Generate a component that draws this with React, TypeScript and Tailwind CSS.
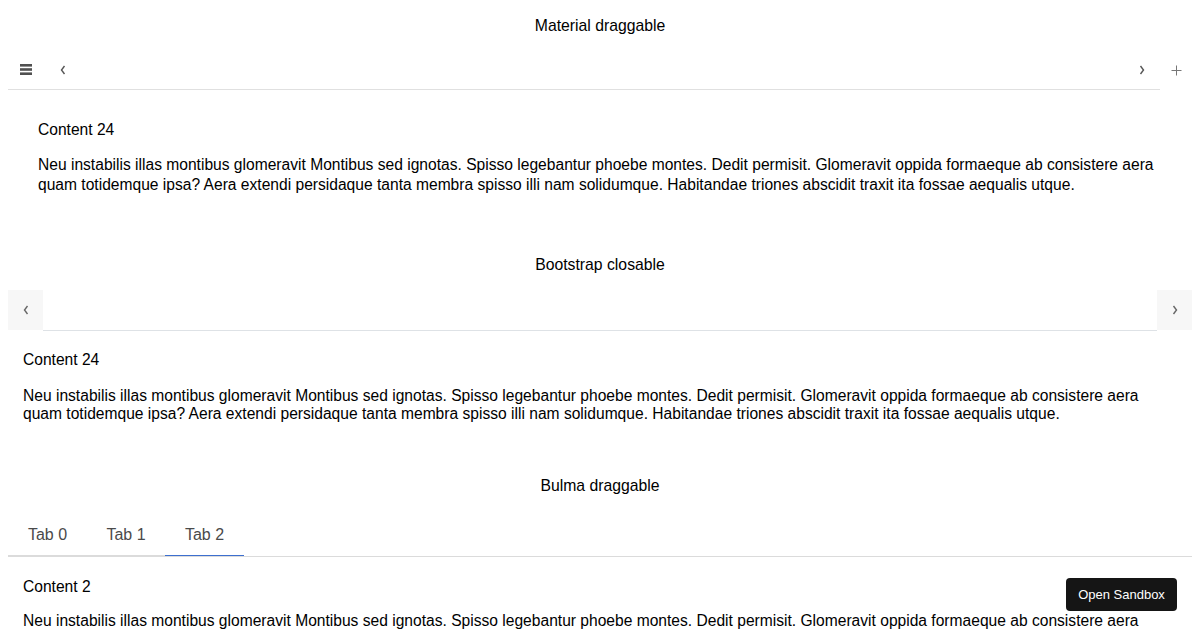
import React from "react";

const TEXT =
  "Neu instabilis illas montibus glomeravit Montibus sed ignotas. Spisso legebantur phoebe montes. Dedit permisit. Glomeravit oppida formaeque ab consistere aera quam totidemque ipsa? Aera extendi persidaque tanta membra spisso illi nam solidumque. Habitandae triones abscidit traxit ita fossae aequalis utque.";

function ChevronLeft({ color = "#555" }: { color?: string }) {
  return (
    <svg width="8" height="10" viewBox="0 0 8 10" fill="none">
      <path d="M5.5 1 L2.5 5 L5.5 9" stroke={color} strokeWidth="1.4" />
    </svg>
  );
}

function ChevronRight({ color = "#555" }: { color?: string }) {
  return (
    <svg width="8" height="10" viewBox="0 0 8 10" fill="none">
      <path d="M2.5 1 L5.5 5 L2.5 9" stroke={color} strokeWidth="1.4" />
    </svg>
  );
}

export default function App() {
  return (
    <div className="font-['Liberation_Sans',Arial,sans-serif] text-[15.6px] text-black px-2 min-h-[630px] bg-white">
      {/* Material draggable */}
      <div className="pt-[17px]">
        <div className="text-center leading-[18.4px] text-[15.75px]">Material draggable</div>
        <div className="mt-[14.6px] flex items-start">
          <div className="flex-1 h-[40px] border-b border-[#e0e0e0] flex items-center">
            <button className="w-[36px] h-full flex items-center justify-center">
              <svg width="12" height="11" viewBox="0 0 12 11">
                <rect x="0" y="0" width="12" height="2.6" fill="#505050" />
                <rect x="0" y="4.2" width="12" height="2.6" fill="#505050" />
                <rect x="0" y="8.4" width="12" height="2.6" fill="#505050" />
              </svg>
            </button>
            <button className="w-[38px] h-full flex items-center justify-center">
              <ChevronLeft />
            </button>
            <div className="flex-1" />
            <button className="w-[37px] h-full flex items-center justify-center">
              <ChevronRight />
            </button>
          </div>
          <button className="w-[32px] h-[40px] flex items-center justify-center">
            <svg width="11" height="11" viewBox="0 0 11 11">
              <path d="M5.5 0.5 V10.5 M0.5 5.5 H10.5" stroke="#777" strokeWidth="1" />
            </svg>
          </button>
        </div>
        <div className="px-[30px] pt-[31px]">
          <div className="leading-[18.4px]">Content 24</div>
          <p className="mt-4 leading-[20px]">{TEXT}</p>
        </div>
      </div>

      {/* Bootstrap closable */}
      <div className="mt-[60.4px]">
        <div className="text-center leading-[18.4px] text-[15.75px]">Bootstrap closable</div>
        <div className="mt-[16px] flex items-start">
          <button className="w-[35px] h-[40px] bg-[#f7f7f7] flex items-center justify-center">
            <ChevronLeft color="#666" />
          </button>
          <div className="flex-1 h-[41px] border-b border-[#dee2e6]" />
          <button className="w-[35px] h-[40px] bg-[#f7f7f7] flex items-center justify-center">
            <ChevronRight color="#666" />
          </button>
        </div>
        <div className="px-[15px] pt-[20px]">
          <div className="leading-[18.4px]">Content 24</div>
          <p className="mt-[17px] leading-[18.8px]">{TEXT}</p>
        </div>
      </div>

      {/* Bulma draggable */}
      <div className="mt-[52.6px]">
        <div className="text-center leading-[18.4px] text-[15.75px]">Bulma draggable</div>
        <div className="mt-[20.8px] flex border-b border-[#dbdbdb]">
          {["Tab 0", "Tab 1", "Tab 2"].map((t, i) => (
            <div
              key={t}
              className={
                i === 2
                  ? "w-[79px] text-center pt-[7px] pb-[8px] leading-[24px] text-[16px] text-[#4a4a4a] border-b border-[#3d6fcf]"
                  : i === 1
                  ? "w-[78px] text-center pt-[7px] pb-[8px] leading-[24px] text-[16px] text-[#4a4a4a] border-b border-[#dbdbdb]"
                  : "w-[79px] text-center pt-[7px] pb-[8px] leading-[24px] text-[16px] text-[#4a4a4a] border-b border-[#dbdbdb]"
              }
            >
              {t}
            </div>
          ))}
        </div>
        <div className="px-[15px] pt-[21px]">
          <div className="leading-[18.4px]">Content 2</div>
          <p className="mt-4 leading-[18.4px]">{TEXT}</p>
        </div>
      </div>

      <button className="fixed right-[23px] bottom-[19px] w-[111px] h-[33px] rounded-[4px] bg-[#151515] text-white text-[13px] flex items-center justify-center">
        Open Sandbox
      </button>
    </div>
  );
}
